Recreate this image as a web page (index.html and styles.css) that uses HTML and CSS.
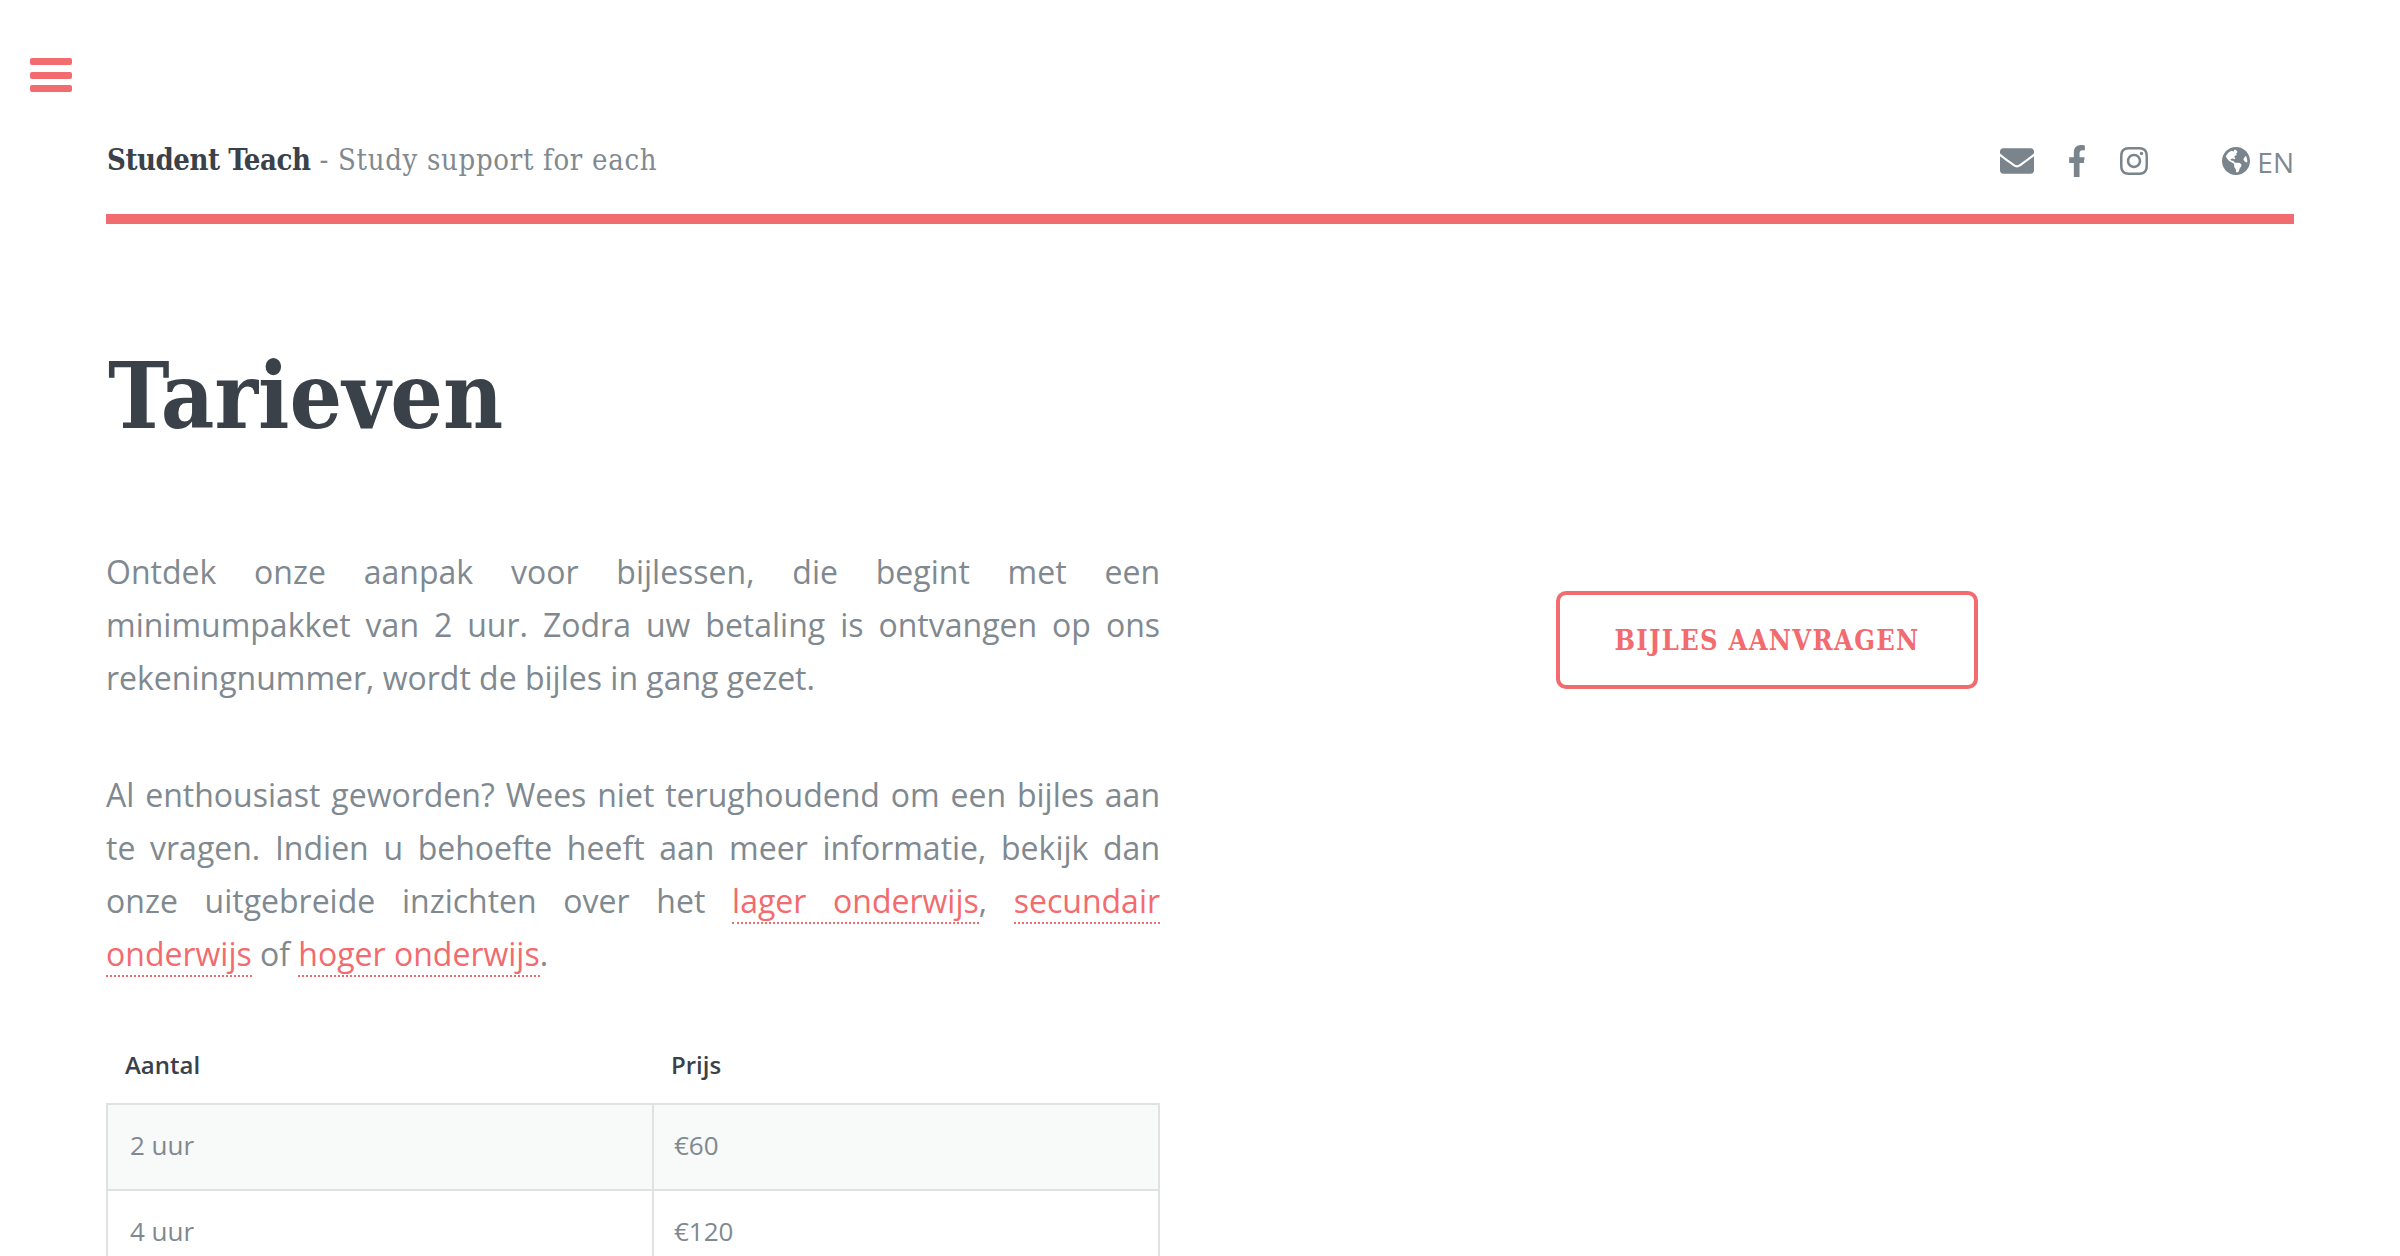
FILE: index.html
```html
<!DOCTYPE html>
<html lang="nl">
<head>
<meta charset="utf-8">
<title>Tarieven - Student Teach</title>
<link rel="stylesheet" href="styles.css">
</head>
<body>
<button class="menu-toggle" aria-label="Menu"><span></span><span></span><span></span></button>
<div class="page">
  <header class="site-header">
    <div class="brand"><strong>Student Teach</strong> - Study support for each</div>
    <nav class="social">
      <a class="icon-mail"><svg viewBox="0 0 512 512" preserveAspectRatio="none"><path d="M502.3 190.8c3.9-3.1 9.7-.2 9.7 4.7V400c0 26.5-21.5 48-48 48H48c-26.5 0-48-21.5-48-48V195.6c0-5 5.7-7.8 9.7-4.7 22.4 17.4 52.1 39.5 154.1 113.6 21.1 15.4 56.7 47.8 92.2 47.6 35.7.3 72-32.8 92.3-47.6 102-74.1 131.6-96.3 154-113.7zM256 320c23.2.4 56.6-29.2 73.4-41.4 132.7-96.3 142.8-104.7 173.4-128.7 5.8-4.5 9.2-11.5 9.2-18.9v-19c0-26.5-21.5-48-48-48H48C21.5 64 0 85.5 0 112v19c0 7.4 3.4 14.3 9.2 18.9 30.6 23.9 40.7 32.4 173.4 128.7 16.8 12.2 50.2 41.8 73.4 41.4z"/></svg></a>
      <a class="icon-fb"><svg viewBox="20 0 280 512" preserveAspectRatio="none"><path d="M279.14 288l14.22-92.66h-88.91v-60.13c0-25.35 12.42-50.06 52.24-50.06h40.42V6.26S260.43 0 225.36 0c-73.22 0-121.08 44.38-121.08 124.72v70.62H22.89V288h81.39v224h100.17V288z"/></svg></a>
      <a class="icon-ig"><svg viewBox="0 32 448 448"><path d="M224.1 141c-63.6 0-114.9 51.3-114.9 114.9s51.3 114.9 114.9 114.9S339 319.5 339 255.9 287.7 141 224.1 141zm0 189.6c-41.1 0-74.7-33.5-74.7-74.7s33.5-74.7 74.7-74.7 74.7 33.5 74.7 74.7-33.6 74.7-74.7 74.7zm146.4-194.3c0 14.9-12 26.8-26.8 26.8-14.9 0-26.8-12-26.8-26.8s12-26.8 26.8-26.8 26.8 12 26.8 26.8zm76.1 27.2c-1.7-35.9-9.9-67.7-36.2-93.9-26.2-26.2-58-34.4-93.9-36.2-37-2.1-147.9-2.1-184.9 0-35.8 1.7-67.6 9.9-93.9 36.1s-34.4 58-36.2 93.9c-2.1 37-2.1 147.9 0 184.9 1.7 35.9 9.9 67.7 36.2 93.9s58 34.4 93.9 36.2c37 2.1 147.9 2.1 184.9 0 35.9-1.7 67.7-9.9 93.9-36.2 26.2-26.2 34.4-58 36.2-93.9 2.1-37 2.1-147.8 0-184.8zM398.8 388c-7.8 19.6-22.9 34.7-42.6 42.6-29.5 11.7-99.5 9-132.1 9s-102.7 2.6-132.1-9c-19.6-7.8-34.7-22.9-42.6-42.6-11.7-29.5-9-99.5-9-132.1s-2.6-102.7 9-132.1c7.8-19.6 22.9-34.7 42.6-42.6 29.5-11.7 99.5-9 132.1-9s102.7-2.6 132.1 9c19.6 7.8 34.7 22.9 42.6 42.6 11.7 29.5 9 99.5 9 132.1s2.7 102.7-9 132.1z"/></svg></a>
      <a class="lang"><svg class="icon-globe" viewBox="0 8 496 496"><path d="M248 8C111.03 8 0 119.03 0 256s111.03 248 248 248 248-111.03 248-248S384.97 8 248 8zm82.29 357.6c-3.9 3.88-7.99 7.95-11.31 11.28-2.99 3-5.1 6.7-6.17 10.71-1.51 5.66-2.73 11.38-4.77 16.87l-17.39 46.85c-13.76 3-28 4.69-42.65 4.69v-27.38c1.69-12.62-7.64-36.26-22.63-51.25-6-6-9.37-14.14-9.37-22.63v-32.01c0-11.64-6.27-22.34-16.46-27.97-14.37-7.95-34.81-19.06-48.81-26.11-11.48-5.78-22.1-13.14-31.65-21.75l-.8-.72a114.792 114.792 0 0 1-18.06-20.74c-9.38-13.77-24.66-36.42-34.59-51.14 20.47-45.5 57.36-82.04 103.2-101.89l24.01 12.01C203.48 89.74 216 82.01 216 70.11v-11.3c7.99-1.29 16.12-2.11 24.45-2.42l28.3 28.3c6.25 6.25 6.25 16.38 0 22.63L264 112l-10.34 10.34c-3.12 3.12-3.12 8.19 0 11.31l4.69 4.69c3.12 3.12 3.12 8.19 0 11.31l-8 8a8.008 8.008 0 0 1-5.66 2.34h-8.99c-2.08 0-4.08.81-5.58 2.27l-9.92 9.65a8.008 8.008 0 0 0-1.58 9.31l15.59 31.19c2.66 5.32-1.21 11.58-7.15 11.58h-5.64c-1.93 0-3.79-.7-5.24-1.96l-9.28-8.06a16.017 16.017 0 0 0-15.55-3.1l-31.17 10.39a11.95 11.95 0 0 0-8.17 11.34c0 4.53 2.56 8.66 6.61 10.69l11.08 5.54c9.41 4.71 19.79 7.16 30.31 7.16s22.59 27.29 32 32h66.75c8.49 0 16.62 3.37 22.63 9.37l13.69 13.69a30.503 30.503 0 0 1 8.93 21.57 46.536 46.536 0 0 1-13.72 32.98zM417 274.25c-5.79-1.45-10.84-5-14.15-9.97l-17.98-26.97a23.97 23.97 0 0 1 0-26.62l19.59-29.38c2.32-3.47 5.5-6.29 9.24-8.15l12.98-6.49C440.2 193.59 448 223.87 448 256c0 8.67-.74 17.16-1.82 25.54L417 274.25z"/></svg><span>EN</span></a>
    </nav>
  </header>
  <h1 class="title">Tarieven</h1>
  <main class="columns">
    <section class="content">
      <p>Ontdek onze aanpak voor bijlessen, die begint met een minimumpakket van 2 uur. Zodra uw betaling is ontvangen op ons rekeningnummer, wordt de bijles in gang gezet.</p>
      <p>Al enthousiast geworden? Wees niet terughoudend om een bijles aan te vragen. Indien u behoefte heeft aan meer informatie, bekijk dan onze uitgebreide inzichten over het <a href="#">lager onderwijs</a>, <a href="#">secundair onderwijs</a> of <a href="#">hoger onderwijs</a>.</p>
      <table class="prices">
        <thead><tr><th>Aantal</th><th>Prijs</th></tr></thead>
        <tbody>
          <tr><td>2 uur</td><td>€60</td></tr>
          <tr><td>4 uur</td><td>€120</td></tr>
        </tbody>
      </table>
    </section>
    <aside class="cta"><a class="cta-button" href="#">BIJLES AANVRAGEN</a></aside>
  </main>
</div>
</body>
</html>
```
FILE: styles.css
```css
* { box-sizing: border-box; }
html, body { margin: 0; height: 100%; overflow: hidden; background: #fff; }
body { font-family: "Open Sans", "Noto Sans", sans-serif; color: #80898f; position: relative; }
.menu-toggle { position: absolute; left: 30px; top: 58px; width: 42px; height: 34px; padding: 0; border: 0; background: none; display: flex; flex-direction: column; justify-content: space-between; }
.menu-toggle span { display: block; height: 7px; border-radius: 2px; background: #f26b6e; }
.page { padding: 138px 106px 0; }
.site-header { display: flex; justify-content: space-between; align-items: center; height: 76px; box-shadow: 0 10px 0 #f26b6e; }
.brand { font-family: "DejaVu Serif Condensed", "DejaVu Serif", serif; font-size: 29px; letter-spacing: 0.7px; margin: -32px 0 0 1px; color: #80898f; }
.brand strong { color: #3a4149; letter-spacing: -0.45px; }
.social { display: flex; align-items: center; margin-top: -30px; }
.social a { display: flex; align-items: center; }
.social svg { display: block; fill: #7a848c; }
.icon-mail svg { width: 34px; height: 34px; }
.icon-fb { margin-left: 35px; }
.icon-fb svg { width: 16px; height: 32px; }
.icon-ig { margin-left: 35px; }
.icon-ig svg { width: 28px; height: 28px; }
.lang { margin-left: 74px; }
.icon-globe { width: 28px; height: 28px; }
.lang span { margin: 2px 0 0 7px; font-size: 28px; line-height: 28px; }
.title { font-family: "DejaVu Serif Condensed", "DejaVu Serif", serif; font-weight: 700; font-size: 92px; line-height: 104px; color: #3a4149; margin: 130px 0 0 2px; }
.columns { display: grid; grid-template-columns: 1054px 1054px; column-gap: 80px; margin-top: 98px; }
.content p { margin: 0 0 65px; font-size: 32px; line-height: 52.8px; text-align: justify; }
.content a { color: #f26b6e; text-decoration: none; border-bottom: 2px dotted #f26b6e; }
.prices { width: 1054px; border-collapse: collapse; table-layout: fixed; font-size: 26px; margin-top: -13px; }
.prices th:first-child, .prices td:first-child { width: 546px; }
.prices th { text-align: left; color: #3a4149; font-weight: 600; font-size: 24px; height: 71px; padding: 0 18px 7px; }
.prices td { height: 86px; padding: 0 20px 3px 22px; border: 2px solid #dee2e2; }
.prices td + td { padding-left: 20px; }
.prices tbody tr:nth-child(odd) { background: #f8f9f9; }
.cta { display: flex; justify-content: center; align-items: flex-start; padding-top: 45px; }
.cta-button { display: flex; align-items: center; justify-content: center; width: 422px; height: 98px; border: 4px solid #f26b6e; border-radius: 10px; color: #f26b6e; font-family: "DejaVu Serif Condensed", "DejaVu Serif", serif; font-weight: 700; font-size: 27px; letter-spacing: 1.3px; text-decoration: none; }
```
